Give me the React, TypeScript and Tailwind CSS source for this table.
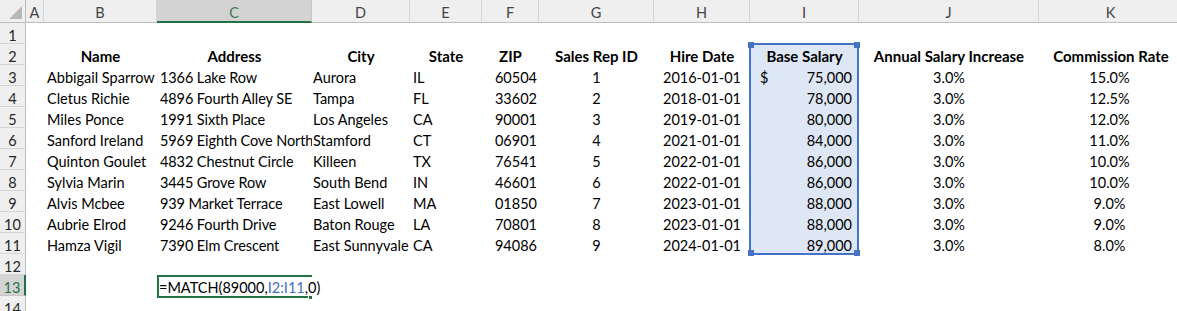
import React from 'react';

const cols = ['A', 'B', 'C', 'D', 'E', 'F', 'G', 'H', 'I', 'J', 'K'];

type Row = [string, string, string, string, string, string, string, string, string, string];

const rows: Row[] = [
  ['Abbigail Sparrow', '1366 Lake Row', 'Aurora', 'IL', '60504', '1', '2016-01-01', '75,000', '3.0%', '15.0%'],
  ['Cletus Richie', '4896 Fourth Alley SE', 'Tampa', 'FL', '33602', '2', '2018-01-01', '78,000', '3.0%', '12.5%'],
  ['Miles Ponce', '1991 Sixth Place', 'Los Angeles', 'CA', '90001', '3', '2019-01-01', '80,000', '3.0%', '12.0%'],
  ['Sanford Ireland', '5969 Eighth Cove North', 'Stamford', 'CT', '06901', '4', '2021-01-01', '84,000', '3.0%', '11.0%'],
  ['Quinton Goulet', '4832 Chestnut Circle', 'Killeen', 'TX', '76541', '5', '2022-01-01', '86,000', '3.0%', '10.0%'],
  ['Sylvia Marin', '3445 Grove Row', 'South Bend', 'IN', '46601', '6', '2022-01-01', '86,000', '3.0%', '10.0%'],
  ['Alvis Mcbee', '939 Market Terrace', 'East Lowell', 'MA', '01850', '7', '2023-01-01', '88,000', '3.0%', '9.0%'],
  ['Aubrie Elrod', '9246 Fourth Drive', 'Baton Rouge', 'LA', '70801', '8', '2023-01-01', '88,000', '3.0%', '9.0%'],
  ['Hamza Vigil', '7390 Elm Crescent', 'East Sunnyvale', 'CA', '94086', '9', '2024-01-01', '89,000', '3.0%', '8.0%'],
];

const headers = ['Name', 'Address', 'City', 'State', 'ZIP', 'Sales Rep ID', 'Hire Date', 'Base Salary', 'Annual Salary Increase', 'Commission Rate'];

const gridCols = 'grid grid-cols-[26px_18px_113px_155px_98px_72px_57px_115px_96px_109px_180px_144px]';

function RowHead({ n, active }: { n: number; active?: boolean }) {
  return (
    <div
      className={
        active
          ? 'h-[21px] pt-[5px] leading-[15px] text-center bg-[#d3d3d3] text-[#217346] border-b border-[#c6c6c6] border-r-2 border-r-[#217346]'
          : 'h-[21px] pt-[5px] leading-[15px] text-center bg-[#efefef] text-[#262626] border-b border-[#d5d5d5] border-r border-r-[#bdbdbd]'
      }
    >
      {n}
    </div>
  );
}

function Cell({ children, className = '' }: { children?: React.ReactNode; className?: string }) {
  return <div className={`h-[21px] pt-[5px] leading-[15px] flex items-start overflow-hidden whitespace-nowrap ${className}`}>{children}</div>;
}

function Handle({ className }: { className: string }) {
  return <div className={`absolute w-[6px] h-[6px] bg-[#4472c4] ${className}`} />;
}

export default function App() {
  return (
    <div className="w-[1177px] h-[311px] overflow-hidden bg-white text-[14.5px] text-black" style={{ fontFamily: 'Lato, "Liberation Sans", sans-serif' }}>
      <div className={`${gridCols} relative`}>
        {/* column header bar */}
        <div className="h-[23px] bg-[#efefef] border-b border-[#bdbdbd] border-r border-r-[#bdbdbd] relative">
          <div className="absolute right-[3px] bottom-[3px] w-0 h-0 border-l-[13px] border-l-transparent border-b-[13px] border-b-[#b8b8b8]" />
        </div>
        {cols.map((c) =>
          c === 'C' ? (
            <div key={c} className="h-[23px] pt-[5px] leading-[15px] text-center bg-[#d3d3d3] text-[#3d7a57] border-r border-[#c6c6c6] border-b-2 border-b-[#217346]">
              {c}
            </div>
          ) : (
            <div key={c} className="h-[23px] pt-[5px] leading-[15px] text-center bg-[#efefef] text-[#444] border-r border-[#d5d5d5] border-b border-b-[#bdbdbd]">
              {c}
            </div>
          )
        )}

        {/* row 1 */}
        <RowHead n={1} />
        {cols.map((c) => (
          <Cell key={c} />
        ))}

        {/* row 2: headers */}
        <RowHead n={2} />
        <Cell />
        {headers.map((h, i) => (
          <Cell key={h} className={`justify-center font-bold text-[15px] ${i === 7 ? 'bg-[#dde7f5]' : ''}`}>
            {h}
          </Cell>
        ))}

        {/* data rows */}
        {rows.map((r, idx) => (
          <React.Fragment key={r[0]}>
            <RowHead n={idx + 3} />
            <Cell />
            <Cell className="pl-[3px]">{r[0]}</Cell>
            <Cell className="pl-[3px] tracking-[-0.1px]">{r[1]}</Cell>
            <Cell className="pl-[1px]">{r[2]}</Cell>
            <Cell className="pl-[3px]">{r[3]}</Cell>
            <Cell className="justify-end pr-[2px]">{r[4]}</Cell>
            <Cell className="justify-center">{r[5]}</Cell>
            <Cell className="justify-center">{r[6]}</Cell>
            <Cell className="justify-between bg-[#dde7f5] pl-[10px] pr-[7px]">
              <span>{idx === 0 ? '$' : ''}</span>
              <span>{r[7]}</span>
            </Cell>
            <Cell className="justify-center">{r[8]}</Cell>
            <Cell className="justify-center pr-[3px]">{r[9]}</Cell>
          </React.Fragment>
        ))}

        {/* row 12 */}
        <RowHead n={12} />
        {cols.map((c) => (
          <Cell key={c} />
        ))}

        {/* row 13: formula in edit mode */}
        <RowHead n={13} active />
        <Cell />
        <Cell />
        <div className="h-[21px] relative z-10">
          <div className="absolute left-0 right-0 top-0 bottom-[-2px] border-t-2 border-l-2 border-b-2 border-[#217346]" />
          <div className="absolute right-[-1px] bottom-[-4px] w-[5px] h-[5px] bg-[#217346] border border-white" />
          <div className="absolute left-[2px] top-[5px] leading-[15px] whitespace-nowrap">
            =MATCH(89000,<span className="text-[#3f6fbf]">I2:I11</span>,0)
          </div>
        </div>
        {cols.slice(3).map((c) => (
          <Cell key={c} />
        ))}

        {/* row 14 */}
        <RowHead n={14} />
        {cols.map((c) => (
          <Cell key={c} />
        ))}

        {/* selection I2:I11 */}
        <div className="absolute left-[749px] top-[43px] w-[110px] h-[212px] border-2 border-[#4472c4] pointer-events-none">
          <Handle className="left-[-3px] top-[-3px]" />
          <Handle className="right-[-3px] top-[-3px]" />
          <Handle className="left-[-3px] bottom-[-3px]" />
          <Handle className="right-[-3px] bottom-[-3px]" />
        </div>
      </div>
    </div>
  );
}
